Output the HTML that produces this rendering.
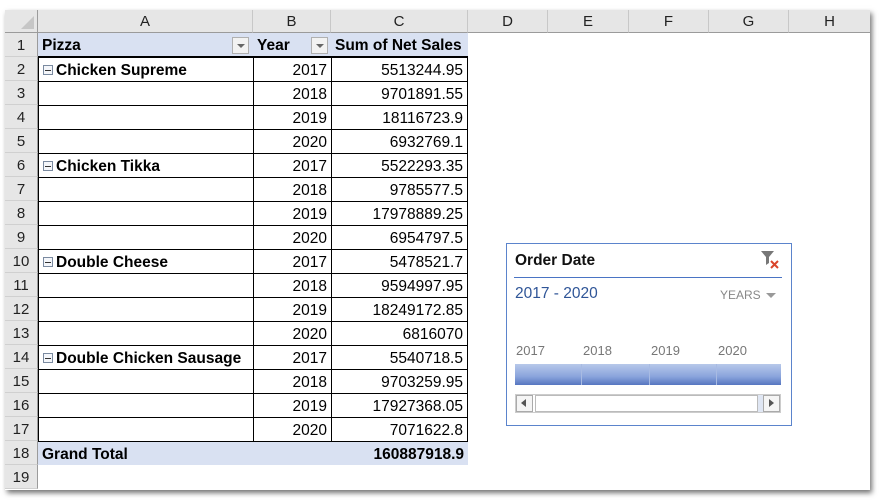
<!DOCTYPE html>
<html><head><meta charset="utf-8"><style>
body{margin:0;width:879px;height:500px;background:#fff;position:relative;overflow:hidden;font-family:"Liberation Sans",sans-serif;}
.sheet{position:absolute;left:5px;top:10px;width:865px;height:480px;background:#fff;box-shadow:2px 3px 5px rgba(0,0,0,.55);}
.a{position:absolute;box-sizing:border-box;}
.ch{top:10px;height:23px;background:#e6e6e6;border-right:1px solid #c8c8c8;border-bottom:1px solid #9b9b9b;text-align:center;font-size:15px;line-height:24px;color:#222;}
.rh{left:5px;width:33px;height:24px;background:#e6e6e6;border-bottom:1px solid #d0d0d0;border-right:1px solid #9b9b9b;text-align:center;font-size:15px;line-height:25px;color:#222;}
.c{height:25px;border:1px solid #000;font-size:15.5px;line-height:26px;padding:0 4px;white-space:nowrap;color:#000;}
.r{text-align:right;}
.b{font-weight:bold;}
.hd{background:#d9e1f2;font-weight:bold;border:none;height:24px;}
.mn{display:inline-block;width:10px;height:10px;border:1px solid #7a8aa0;box-sizing:border-box;position:relative;top:0px;margin-right:3px;background:#f4f6fa}
.mn:after{content:"";position:absolute;left:1px;right:1px;top:4px;height:1px;background:#333}
.dd{position:absolute;width:17px;height:17px;border:1px solid #b0b0b0;background:#f2f2f2;box-sizing:border-box;}
.dd:after{content:"";position:absolute;left:4px;top:6px;border-left:4px solid transparent;border-right:4px solid transparent;border-top:4px solid #666}
</style></head><body>
<div class="sheet"></div>
<div class="a" style="left:5px;top:10px;width:33px;height:23px;background:#e6e6e6;border-right:1px solid #9b9b9b;border-bottom:1px solid #9b9b9b"></div>
<div class="a" style="left:21px;top:16px;width:0;height:0;border-left:13px solid transparent;border-bottom:13px solid #c6c6c6"></div>
<div class="a ch" style="left:38px;width:215px">A</div>
<div class="a ch" style="left:253px;width:78px">B</div>
<div class="a ch" style="left:331px;width:137px">C</div>
<div class="a ch" style="left:468px;width:80px">D</div>
<div class="a ch" style="left:548px;width:81px">E</div>
<div class="a ch" style="left:629px;width:80px">F</div>
<div class="a ch" style="left:709px;width:80px">G</div>
<div class="a ch" style="left:789px;width:81px;border-right:none">H</div>
<div id="rows"></div>

<div class="a c hd" style="left:38px;top:33px;width:215px">Pizza</div>
<div class="a c hd" style="left:253px;top:33px;width:78px">Year</div>
<div class="a c hd" style="left:331px;top:33px;width:137px">Sum of Net Sales</div>
<div class="dd" style="left:232px;top:37px"></div>
<div class="dd" style="left:311px;top:37px"></div>
<div class="a" style="left:38px;top:56px;width:430px;height:1px;background:#000"></div>

<div id="body"></div>
<div class="a c hd" style="left:38px;top:441px;width:215px;border-top:1px solid #000">Grand Total</div>
<div class="a c hd" style="left:253px;top:441px;width:78px;border-top:1px solid #000"></div>
<div class="a c hd r" style="left:331px;top:441px;width:137px;border-top:1px solid #000">160887918.9</div>

<div class="a" style="left:506px;top:243px;width:286px;height:183px;border:1px solid #5b84cc;background:#fff"></div>
<div class="a" style="left:515px;top:252px;font-size:15.5px;font-weight:bold;color:#111">Order Date</div>
<svg class="a" style="left:760px;top:250px" width="22" height="20"><path d="M1 1h13l-5 6v6l-3 2V7z" fill="#777"/><path d="M11 11l7 7M18 11l-7 7" stroke="#d9452b" stroke-width="2"/></svg>
<div class="a" style="left:514px;top:277px;width:268px;height:1px;background:#4a74c4"></div>
<div class="a" style="left:515px;top:285px;font-size:15.5px;color:#2f5597">2017 - 2020</div>
<div class="a" style="left:720px;top:288px;font-size:12px;color:#888">YEARS</div>
<div class="a" style="left:766px;top:293px;border-left:5px solid transparent;border-right:5px solid transparent;border-top:5px solid #999"></div>
<div class="a" style="left:516px;top:343px;font-size:13px;color:#777">2017</div>
<div class="a" style="left:583px;top:343px;font-size:13px;color:#777">2018</div>
<div class="a" style="left:651px;top:343px;font-size:13px;color:#777">2019</div>
<div class="a" style="left:718px;top:343px;font-size:13px;color:#777">2020</div>
<div class="a" style="left:515px;top:364px;width:266px;height:21px;background:linear-gradient(#b7c8ea,#8aa4dc 60%,#5676c0)"></div>
<div class="a" style="left:581px;top:364px;width:1px;height:21px;background:#a8bbe3"></div>
<div class="a" style="left:649px;top:364px;width:1px;height:21px;background:#a8bbe3"></div>
<div class="a" style="left:716px;top:364px;width:1px;height:21px;background:#a8bbe3"></div>
<div class="a" style="left:515px;top:394px;width:266px;height:19px;border:1px solid #ccc;background:#fff"></div>
<div class="a" style="left:516px;top:395px;width:17px;height:17px;border:1px solid #aaa;background:#f5f5f5"></div>
<div class="a" style="left:521px;top:399px;border-top:4px solid transparent;border-bottom:4px solid transparent;border-right:5px solid #555"></div>
<div class="a" style="left:535px;top:395px;width:223px;height:17px;border:1px solid #bbb;background:#fff"></div>
<div class="a" style="left:758px;top:395px;width:5px;height:17px;background:#dfe6f3"></div>
<div class="a" style="left:763px;top:395px;width:17px;height:17px;border:1px solid #aaa;background:#f5f5f5"></div>
<div class="a" style="left:769px;top:399px;border-top:4px solid transparent;border-bottom:4px solid transparent;border-left:5px solid #555"></div>

<script>
var rows='';
for(var i=1;i<=19;i++){rows+='<div class="a rh" style="top:'+(33+(i-1)*24)+'px">'+i+'</div>';}
document.getElementById('rows').innerHTML=rows;
var data=[["Chicken Supreme",["5513244.95","9701891.55","18116723.9","6932769.1"]],["Chicken Tikka",["5522293.35","9785577.5","17978889.25","6954797.5"]],["Double Cheese",["5478521.7","9594997.95","18249172.85","6816070"]],["Double Chicken Sausage",["5540718.5","9703259.95","17927368.05","7071622.8"]]];
var h='';
for(var g=0;g<4;g++){for(var k=0;k<4;k++){var t=57+(g*4+k)*24;
h+='<div class="a c b" style="left:38px;top:'+t+'px;width:216px">'+(k==0?'<span class="mn"></span>'+data[g][0]:'')+'</div>';
h+='<div class="a c r" style="left:253px;top:'+t+'px;width:79px">'+(2017+k)+'</div>';
h+='<div class="a c r" style="left:331px;top:'+t+'px;width:137px">'+data[g][1][k]+'</div>';}}
document.getElementById('body').innerHTML=h;
</script>
</body></html>
